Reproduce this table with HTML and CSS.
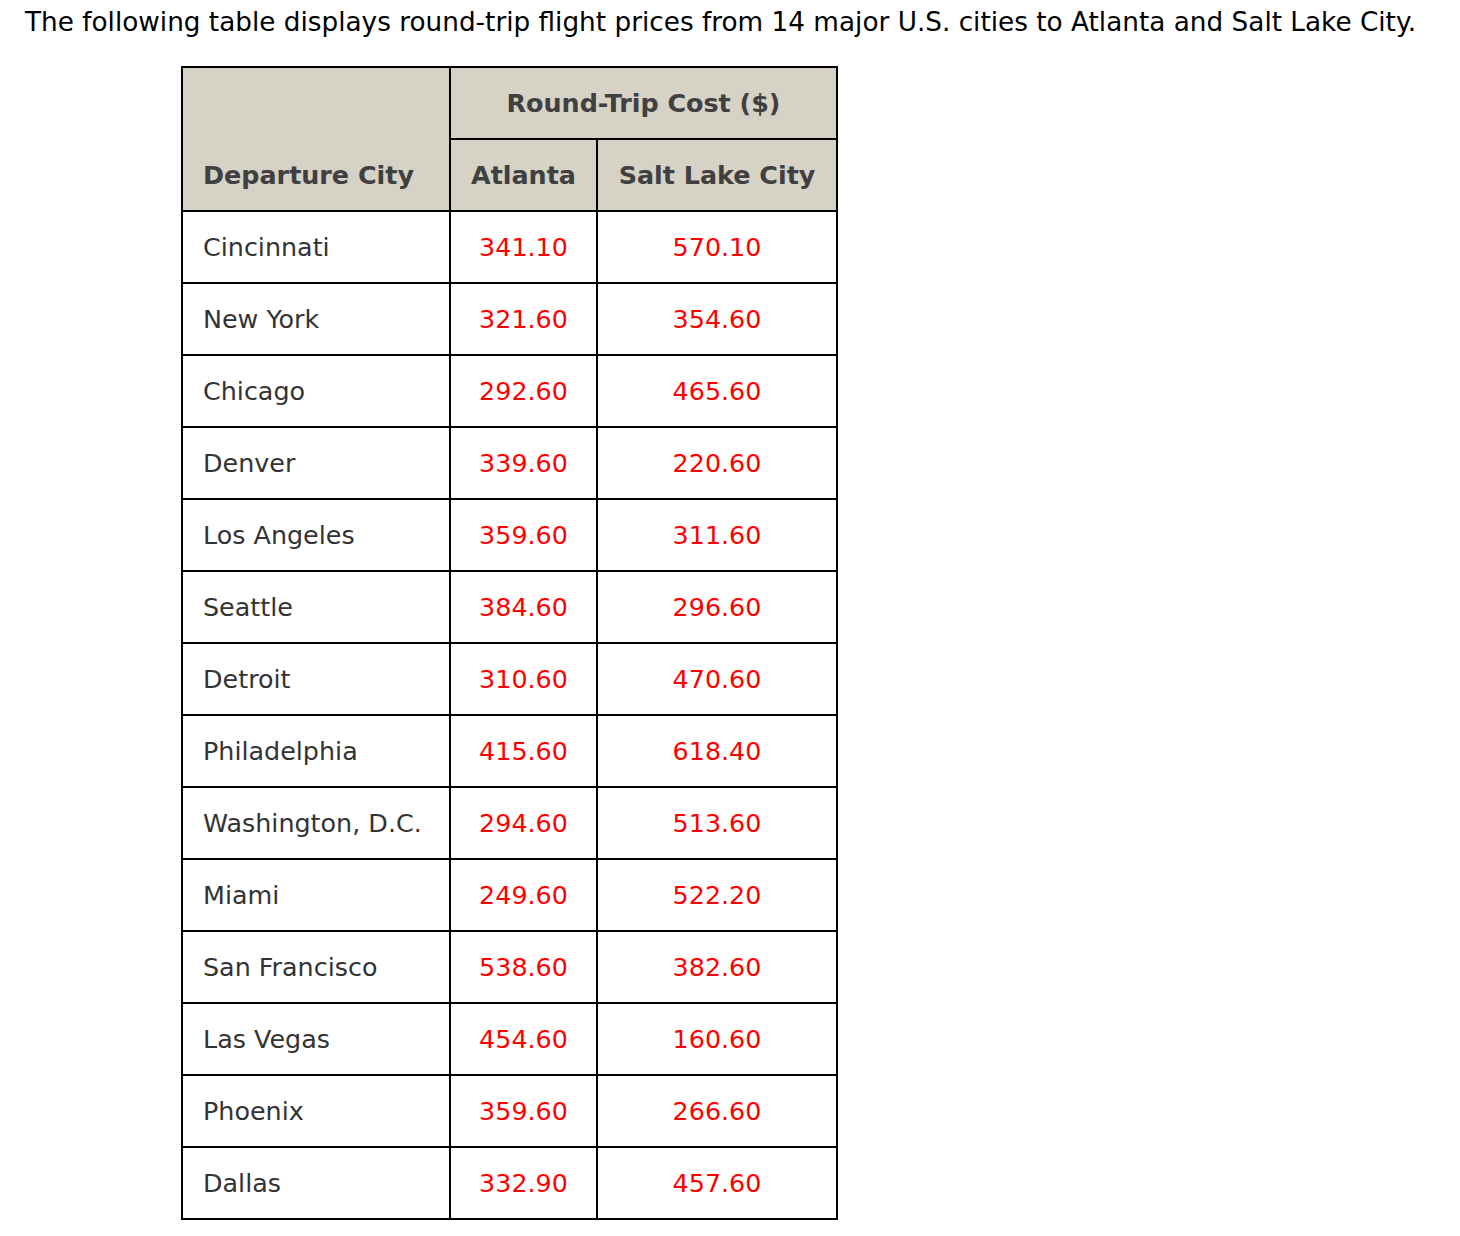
FILE: index.html
```html
<!DOCTYPE html>
<html>
<head>
<meta charset="utf-8">
<link rel="stylesheet" href="styles.css">
</head>
<body>
<p class="intro">The following table displays round-trip flight prices from 14 major U.S. cities to Atlanta and Salt Lake City.</p>
<table class="prices">
  <colgroup>
    <col class="c1"><col class="c2"><col class="c3">
  </colgroup>
  <thead>
    <tr>
      <th rowspan="2" class="left bottom">Departure City</th>
      <th colspan="2">Round-Trip Cost ($)</th>
    </tr>
    <tr>
      <th>Atlanta</th>
      <th>Salt Lake City</th>
    </tr>
  </thead>
  <tbody>
    <tr><td class="city">Cincinnati</td><td class="num">341.10</td><td class="num">570.10</td></tr>
    <tr><td class="city">New York</td><td class="num">321.60</td><td class="num">354.60</td></tr>
    <tr><td class="city">Chicago</td><td class="num">292.60</td><td class="num">465.60</td></tr>
    <tr><td class="city">Denver</td><td class="num">339.60</td><td class="num">220.60</td></tr>
    <tr><td class="city">Los Angeles</td><td class="num">359.60</td><td class="num">311.60</td></tr>
    <tr><td class="city">Seattle</td><td class="num">384.60</td><td class="num">296.60</td></tr>
    <tr><td class="city">Detroit</td><td class="num">310.60</td><td class="num">470.60</td></tr>
    <tr><td class="city">Philadelphia</td><td class="num">415.60</td><td class="num">618.40</td></tr>
    <tr><td class="city">Washington, D.C.</td><td class="num">294.60</td><td class="num">513.60</td></tr>
    <tr><td class="city">Miami</td><td class="num">249.60</td><td class="num">522.20</td></tr>
    <tr><td class="city">San Francisco</td><td class="num">538.60</td><td class="num">382.60</td></tr>
    <tr><td class="city">Las Vegas</td><td class="num">454.60</td><td class="num">160.60</td></tr>
    <tr><td class="city">Phoenix</td><td class="num">359.60</td><td class="num">266.60</td></tr>
    <tr><td class="city">Dallas</td><td class="num">332.90</td><td class="num">457.60</td></tr>
  </tbody>
</table>
</body>
</html>
```
FILE: styles.css
```css
html, body {
  margin: 0;
  padding: 0;
  background: #ffffff;
}
body {
  font-family: "DejaVu Sans", Verdana, sans-serif;
}
.intro {
  margin: 0;
  padding: 7px 0 0 25px;
  font-size: 26.3px;
  line-height: 30px;
  color: #000;
  white-space: nowrap;
}
.prices {
  margin: 29px 0 0 181px;
  border-collapse: collapse;
  table-layout: fixed;
  width: 655px;
  font-size: 25.4px;
}
.c1 { width: 268px; }
.c2 { width: 147px; }
.c3 { width: 240px; }
.prices th, .prices td {
  border: 2px solid #000;
  height: 72px;
  padding: 0;
  box-sizing: border-box;
}
.prices th {
  background: #d6d2c6;
  color: #404040;
  font-weight: bold;
  text-align: center;
  vertical-align: middle;
}
.prices th.left {
  text-align: left;
  padding-left: 20px;
}
.prices th.bottom {
  vertical-align: bottom;
  padding-bottom: 20px;
}
.prices td.city {
  text-align: left;
  padding-left: 20px;
  color: #333;
}
.prices td.num {
  text-align: center;
  color: #ff0000;
}
```
